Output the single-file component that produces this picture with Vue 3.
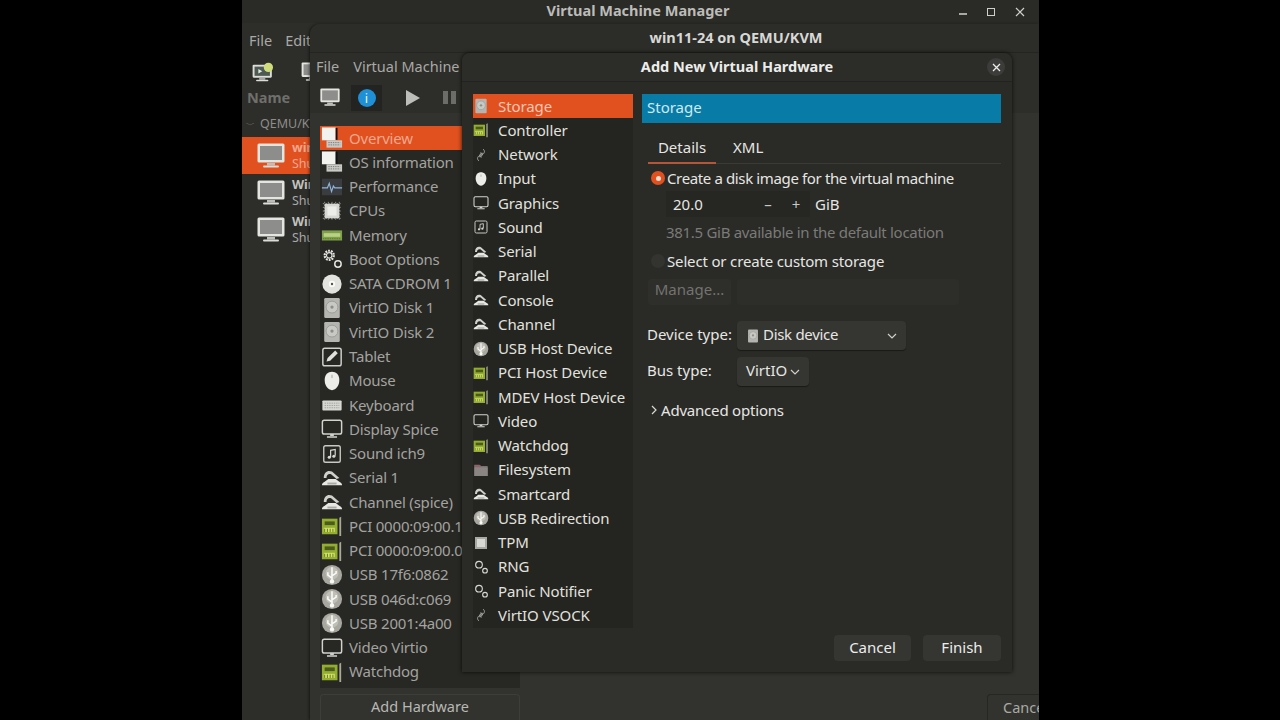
<script setup>
const vmRows = [
  { name: 'win', state: 'Shu', selected: true },
  { name: 'Wir', state: 'Shu', selected: false },
  { name: 'Wir', state: 'Shu', selected: false }
];

const detailRows = [
  { label: 'Overview', icon: 'overview' },
  { label: 'OS information', icon: 'overview' },
  { label: 'Performance', icon: 'perf' },
  { label: 'CPUs', icon: 'chip' },
  { label: 'Memory', icon: 'memory' },
  { label: 'Boot Options', icon: 'gears' },
  { label: 'SATA CDROM 1', icon: 'cdrom' },
  { label: 'VirtIO Disk 1', icon: 'disk' },
  { label: 'VirtIO Disk 2', icon: 'disk' },
  { label: 'Tablet', icon: 'tablet' },
  { label: 'Mouse', icon: 'mouse' },
  { label: 'Keyboard', icon: 'keyboard' },
  { label: 'Display Spice', icon: 'display' },
  { label: 'Sound ich9', icon: 'sound' },
  { label: 'Serial 1', icon: 'serial' },
  { label: 'Channel (spice)', icon: 'serial' },
  { label: 'PCI 0000:09:00.1', icon: 'pci' },
  { label: 'PCI 0000:09:00.0', icon: 'pci' },
  { label: 'USB 17f6:0862', icon: 'usb' },
  { label: 'USB 046d:c069', icon: 'usb' },
  { label: 'USB 2001:4a00', icon: 'usb' },
  { label: 'Video Virtio', icon: 'display' },
  { label: 'Watchdog', icon: 'pci' }
];

const hardwareRows = [
  { label: 'Storage', icon: 'disk' },
  { label: 'Controller', icon: 'pci' },
  { label: 'Network', icon: 'network' },
  { label: 'Input', icon: 'mouse' },
  { label: 'Graphics', icon: 'display' },
  { label: 'Sound', icon: 'sound' },
  { label: 'Serial', icon: 'serial' },
  { label: 'Parallel', icon: 'serial' },
  { label: 'Console', icon: 'serial' },
  { label: 'Channel', icon: 'serial' },
  { label: 'USB Host Device', icon: 'usb' },
  { label: 'PCI Host Device', icon: 'pci' },
  { label: 'MDEV Host Device', icon: 'pci' },
  { label: 'Video', icon: 'display' },
  { label: 'Watchdog', icon: 'pci' },
  { label: 'Filesystem', icon: 'folder' },
  { label: 'Smartcard', icon: 'serial' },
  { label: 'USB Redirection', icon: 'usb' },
  { label: 'TPM', icon: 'tpm' },
  { label: 'RNG', icon: 'rings' },
  { label: 'Panic Notifier', icon: 'rings' },
  { label: 'VirtIO VSOCK', icon: 'network' }
];
</script>

<template>
  <div class="stage">
    <svg class="defs" width="0" height="0" aria-hidden="true">
      <symbol id="vm" viewBox="0 0 28 26">
        <rect x="0.5" y="0.5" width="27" height="19" rx="1.5" fill="#e4e4e0" />
        <rect x="3" y="3" width="22" height="14" fill="#8d8d8b" />
        <rect x="10" y="20" width="8" height="2.5" fill="#bdbdb9" />
        <rect x="6" y="22.5" width="16" height="2" rx="1" fill="#dcdcd8" />
      </symbol>
      <symbol id="vmnew" viewBox="0 0 28 26">
        <rect x="0.5" y="3.500" width="25" height="17" rx="1.5" fill="#dcdcd8" />
        <rect x="3" y="6" width="20" height="12" fill="#4d5a52" />
        <path d="M8 9l5 3-5 3z" fill="#e8e8e4" />
        <rect x="9" y="21" width="8" height="2" fill="#bdbdb9" />
        <rect x="5" y="23" width="16" height="2" rx="1" fill="#dcdcd8" />
        <circle cx="21" cy="7" r="6" fill="#cfdc7c" />
      </symbol>
      <symbol id="overview" viewBox="0 0 24 24">
        <rect x="1" y="0.5" width="15" height="14" fill="#f2f2ee" />
        <rect x="16" y="1" width="2" height="13" fill="#111" />
        <rect x="6" y="14.5" width="17" height="8" fill="#c9c9c5" />
        <path d="M8 17h13M8 19.5h13" stroke="#777" stroke-width="1" stroke-dasharray="1.5 1" />
      </symbol>
      <symbol id="perf" viewBox="0 0 24 24">
        <rect x="1" y="3" width="22" height="18" fill="#3a3c40" />
        <path d="M1 13h6l2-5 2.5 9 2-6 1.500 2H23" fill="none" stroke="#8fb4dc" stroke-width="1.300" />
      </symbol>
      <symbol id="chip" viewBox="0 0 24 24">
        <path d="M4 2v20M8 2v20M12 2v20M16 2v20M20 2v20M2 4h20M2 8h20M2 12h20M2 16h20M2 20h20" stroke="#9a9a96" stroke-width="1" stroke-dasharray="1.500 1.500" />
        <rect x="4" y="4" width="16" height="16" rx="1" fill="#d6d6d2" />
        <rect x="7" y="7" width="10" height="10" fill="#ecece8" />
      </symbol>
      <symbol id="memory" viewBox="0 0 24 24">
        <rect x="1" y="7" width="22" height="11" fill="#7fa04a" />
        <rect x="3" y="10" width="18" height="4" fill="#b9d184" />
        <path d="M2 16h20" stroke="#5a7a30" stroke-dasharray="1.500 1" />
      </symbol>
      <symbol id="gears" viewBox="0 0 24 24" fill="none" stroke="#e4e4e0">
        <circle cx="9" cy="8" r="5" stroke-width="2.400" stroke-dasharray="2 1.100" />
        <circle cx="9" cy="8" r="3" stroke-width="1.200" />
        <circle cx="18.500" cy="17.500" r="3.500" stroke-width="1.600" />
      </symbol>
      <symbol id="cdrom" viewBox="0 0 24 24">
        <circle cx="12" cy="12" r="10.500" fill="#e2e2de" />
        <circle cx="12" cy="12" r="3.500" fill="#fafaf8" />
        <circle cx="12" cy="12" r="1.300" fill="#55554f" />
      </symbol>
      <symbol id="disk" viewBox="0 0 24 24">
        <rect x="3.500" y="1" width="17" height="22" rx="1.500" fill="#b4b4b0" />
        <circle cx="12" cy="11" r="6.500" fill="#c8c8c4" stroke="#999995" />
        <circle cx="12" cy="11" r="1.800" fill="#8c8c88" />
      </symbol>
      <symbol id="tablet" viewBox="0 0 24 24">
        <rect x="2" y="2.500" width="20" height="19" rx="2" fill="none" stroke="#cfcfcb" stroke-width="1.600" />
        <path d="M6 17l1.200-3.800L15.500 5l2.800 2.800-8.300 8.200z" fill="#e0e0dc" />
      </symbol>
      <symbol id="mouse" viewBox="0 0 24 24">
        <path d="M12 2c4.500 0 8 3 8 9s-3.500 11-8 11-8-5-8-11 3.500-9 8-9z" fill="#ecece8" />
        <rect x="11" y="5" width="2" height="4" rx="1" fill="#c5c5c1" />
      </symbol>
      <symbol id="keyboard" viewBox="0 0 24 24">
        <rect x="1.500" y="7" width="21" height="11" rx="1" fill="#d6d6d2" />
        <path d="M4 10h16M4 12.500h16M4 15h16" stroke="#9c9c98" stroke-dasharray="1.500 1" />
      </symbol>
      <symbol id="display" viewBox="0 0 24 24">
        <rect x="1.500" y="2.500" width="21" height="15" rx="2" fill="none" stroke="#d2d2ce" stroke-width="1.600" />
        <path d="M10 17.500h4v2h-4zM6.500 20h11v1.500h-11z" fill="#d2d2ce" />
      </symbol>
      <symbol id="sound" viewBox="0 0 24 24">
        <rect x="3" y="3" width="18" height="18" rx="2" fill="none" stroke="#c8c8c4" stroke-width="1.500" />
        <path d="M10.500 15.500V8l5-1v7" fill="none" stroke="#d8d8d4" stroke-width="1.300" />
        <circle cx="9" cy="15.500" r="1.700" fill="#d8d8d4" />
        <circle cx="14" cy="14.500" r="1.700" fill="#d8d8d4" />
      </symbol>
      <symbol id="serial" viewBox="0 0 24 24">
        <path d="M3 12C3 5 8 3 12 5l8 7-3 1-6-5c-3-1-5 1-5 4z" fill="#cfcfcb" />
        <path d="M1 20c0-2 1-3 3-4l4-3h8l4 3c2 1 3 2 3 4z" fill="#e6e6e2" />
        <rect x="7" y="17" width="10" height="2" fill="#a8a8a4" />
      </symbol>
      <symbol id="pci" viewBox="0 0 24 24">
        <rect x="1" y="4" width="17" height="17" fill="#93ae2f" />
        <rect x="4" y="7" width="11" height="4" fill="#4c5a1f" />
        <rect x="3" y="14" width="12" height="4.500" fill="#d4e36a" />
        <path d="M4 15v3.500M7 15v3.500M10 15v3.500M13 15v3.500" stroke="#5d6f20" />
        <path d="M20 3l2-1v21h-2z" fill="#a9a996" />
      </symbol>
      <symbol id="usb" viewBox="0 0 24 24">
        <circle cx="12" cy="12" r="11" fill="#a7a79f" />
        <circle cx="12" cy="10" r="7" fill="#bfbfb7" />
        <path d="M12 3.500v15M12 15.500l-4.500-3.500V9M12 13l4.500-3V7.500" fill="none" stroke="#fafaf6" stroke-width="1.700" />
        <circle cx="12" cy="19" r="2.400" fill="#fafaf6" />
      </symbol>
      <symbol id="network" viewBox="0 0 24 24" fill="none" stroke="#b0b0ac" stroke-width="1.300">
        <path d="M9 21c-3.500-3-2.500-6 1-8.500l4-3M14 9.500l-3.500-.5M14 9.500l-.5 3.500M15 3c3.500 3 2.500 6-1 8.500l-4 3M10 14.500l3.500.5M10 14.500l.5-3.500" />
      </symbol>
      <symbol id="folder" viewBox="0 0 24 24">
        <path d="M2 4h8l2 2h10v15H2z" fill="#7c6f72" />
        <rect x="2" y="8" width="20" height="13" fill="#8a8483" />
        <rect x="2" y="5" width="9" height="2" fill="#a05a5e" />
      </symbol>
      <symbol id="tpm" viewBox="0 0 24 24">
        <rect x="3" y="3" width="18" height="18" fill="#a8a8a4" />
        <rect x="6" y="6" width="12" height="12" fill="#d8d8d4" />
      </symbol>
      <symbol id="rings" viewBox="0 0 24 24" fill="none" stroke="#d8d8d4" stroke-width="1.700">
        <circle cx="9" cy="8.500" r="5" />
        <circle cx="18" cy="17.500" r="3.500" />
      </symbol>
    </svg>

    <section class="window main-window">
      <header class="titlebar main-title">
        <span>Virtual Machine Manager</span>
        <div class="win-controls">
          <span class="ctl-min"></span>
          <span class="ctl-max"></span>
          <svg width="10" height="10" viewBox="0 0 10 10"><path d="M1 1l8 8M9 1l-8 8" stroke="#cfcfcb" stroke-width="1.200" /></svg>
        </div>
      </header>
      <nav class="menubar main-menu">
        <span>File</span>
        <span>Edit</span>
      </nav>
      <div class="main-tools">
        <svg width="22" height="20"><use href="#vmnew" /></svg>
        <svg width="22" height="20"><use href="#vm" /></svg>
      </div>
      <div class="name-head">Name</div>
      <div class="conn"><span class="conn-chev">﹀</span>QEMU/KVM</div>
      <div v-for="vm in vmRows" :key="vm.state + vm.name + vm.selected" class="vm-row" :class="{ selected: vm.selected }">
        <svg width="28" height="26"><use href="#vm" /></svg>
        <div class="vm-text">
          <b>{{ vm.name }}</b>
          <span>{{ vm.state }}</span>
        </div>
      </div>
    </section>

    <section class="window detail-window">
      <header class="titlebar detail-title">win11-24 on QEMU/KVM</header>
      <nav class="menubar detail-menu">
        <span>File</span>
        <span>Virtual Machine</span>
      </nav>
      <div class="detail-tools">
        <svg width="20" height="19"><use href="#vm" /></svg>
        <span class="tool-info"><i>i</i></span>
        <svg class="tool-play" width="14" height="16" viewBox="0 0 14 16"><path d="M0 0l14 8-14 8z" fill="#bdbdb9" /></svg>
        <span class="tool-pause"><i></i><i></i></span>
      </div>
      <div class="detail-body">
        <div class="detail-col">
          <ul class="detail-list">
            <li v-for="(row, i) in detailRows" :key="row.label" :class="{ active: i === 0 }">
              <svg width="22" height="22"><use :href="'#' + row.icon" /></svg>
              <span>{{ row.label }}</span>
            </li>
          </ul>
          <button class="add-hw">Add Hardware</button>
        </div>
        <button class="back-cancel">Cancel</button>
      </div>
    </section>

    <section class="window dialog">
      <header class="dialog-head">
        <span>Add New Virtual Hardware</span>
        <span class="dialog-close">
          <svg width="9" height="9" viewBox="0 0 9 9"><path d="M1 1l7 7M8 1L1 8" stroke="#ececea" stroke-width="1.300" /></svg>
        </span>
      </header>
      <div class="dialog-body">
        <ul class="hw-list">
          <li v-for="(row, i) in hardwareRows" :key="row.label" :class="{ active: i === 0 }">
            <svg width="16" height="16"><use :href="'#' + row.icon" /></svg>
            <span>{{ row.label }}</span>
          </li>
        </ul>
        <div class="panel">
          <div class="panel-title">Storage</div>
          <div class="tabs">
            <span class="tab on">Details</span>
            <span class="tab">XML</span>
          </div>
          <div class="radio-row first">
            <span class="radio checked"></span>
            <span>Create a disk image for the virtual machine</span>
          </div>
          <div class="size-row">
            <div class="spin">
              <span class="spin-value">20.0</span>
              <span class="spin-btn">–</span>
              <span class="spin-btn">+</span>
            </div>
            <span>GiB</span>
          </div>
          <div class="hint">381.5 GiB available in the default location</div>
          <div class="radio-row second">
            <span class="radio"></span>
            <span>Select or create custom storage</span>
          </div>
          <div class="manage-row">
            <button class="manage">Manage...</button>
            <div class="path-entry"></div>
          </div>
          <div class="field-row device">
            <label>Device type:</label>
            <div class="combo device-combo">
              <svg width="14" height="14"><use href="#disk" /></svg>
              <span class="combo-text">Disk device</span>
              <svg width="10" height="6" viewBox="0 0 10 6"><path d="M1 1l4 4 4-4" fill="none" stroke="#cfcfcb" stroke-width="1.200" /></svg>
            </div>
          </div>
          <div class="field-row bus">
            <label>Bus type:</label>
            <div class="combo bus-combo">
              <span class="combo-text">VirtIO</span>
              <svg width="10" height="6" viewBox="0 0 10 6"><path d="M1 1l4 4 4-4" fill="none" stroke="#cfcfcb" stroke-width="1.200" /></svg>
            </div>
          </div>
          <div class="advanced">
            <svg width="6" height="10" viewBox="0 0 6 10"><path d="M1 1l4 4-4 4" fill="none" stroke="#d8d8d4" stroke-width="1.200" /></svg>
            <span>Advanced options</span>
          </div>
        </div>
      </div>
      <footer class="dialog-foot">
        <button class="foot-btn cancel">Cancel</button>
        <button class="foot-btn">Finish</button>
      </footer>
    </section>
  </div>
</template>

<style>
html, body {
  background: #000;
}
</style>

<style scoped>
.stage {
  position: relative;
  width: 1280px;
  height: 720px;
  overflow: hidden;
  background: #000;
  font-family: "Noto Sans", "Open Sans", sans-serif;
  font-size: 15px;
  color: #e6e6e2;
}
.defs {
  position: absolute;
}
.window {
  position: absolute;
  box-sizing: border-box;
  overflow: hidden;
}
ul {
  list-style: none;
  margin: 0;
  padding: 0;
}
button {
  font: inherit;
  color: inherit;
  border: none;
  background: none;
  padding: 0;
}

.main-window {
  left: 242px;
  top: 0;
  width: 797px;
  height: 720px;
  background: #2d2d2a;
}
.titlebar {
  font-weight: 700;
  text-align: center;
}
.main-title {
  position: relative;
  height: 23px;
  line-height: 21px;
  padding-right: 5px;
  color: #bcbcb8;
  font-size: 14.5px;
  background: #2a2a27;
}
.win-controls {
  position: absolute;
  top: 0;
  right: 14px;
  height: 23px;
  display: flex;
  align-items: center;
  gap: 20px;
}
.ctl-min {
  width: 8px;
  height: 2px;
  margin-top: 4px;
  background: #a8a8a4;
}
.ctl-max {
  width: 6px;
  height: 6px;
  border: 1px solid #cfcfcb;
}
.menubar {
  display: flex;
  color: #a9a9a5;
}
.main-menu {
  gap: 13px;
  height: 34px;
  padding: 7px 0 0 7px;
  box-sizing: border-box;
  font-size: 14.500px;
}
.main-tools {
  display: flex;
  gap: 27px;
  height: 29px;
  padding-left: 10px;
  align-items: center;
}
.name-head {
  height: 29px;
  line-height: 22px;
  padding-left: 5px;
  font-weight: 700;
  color: #6f6f6b;
  font-size: 14.500px;
}
.conn {
  height: 22px;
  line-height: 18px;
  padding-left: 4px;
  font-size: 12.500px;
  color: #8d8d89;
}
.conn-chev {
  display: inline-block;
  width: 14px;
  font-size: 9px;
}
.vm-row {
  display: flex;
  align-items: center;
  gap: 7px;
  height: 37px;
  padding-left: 15px;
}
.vm-row.selected {
  background: #e1501f;
}
.vm-text {
  display: flex;
  flex-direction: column;
  font-size: 12.500px;
  line-height: 16px;
  color: #a9a9a5;
}
.vm-text b {
  color: #c2c2be;
}
.vm-row.selected .vm-text,
.vm-row.selected .vm-text b {
  color: #efa88e;
}

.detail-window {
  left: 310px;
  top: 24px;
  width: 729px;
  height: 696px;
  background: #32332e;
  border-top-left-radius: 10px;
  box-shadow: -1px 0 3px rgba(0, 0, 0, 0.5);
}
.detail-title {
  height: 29px;
  line-height: 27px;
  padding-left: 123px;
  color: #d8d8d4;
  font-size: 14.500px;
  background: #2c2c29;
  border-bottom: 1px solid #242422;
  box-sizing: border-box;
}
.detail-menu {
  gap: 14px;
  height: 29px;
  padding: 3px 0 0 6px;
  box-sizing: border-box;
  font-size: 14.500px;
  background: #2d2d2a;
}
.detail-tools {
  display: flex;
  align-items: center;
  height: 31px;
  padding-left: 10px;
  background: #2d2d2a;
}
.tool-info {
  display: flex;
  align-items: center;
  justify-content: center;
  width: 31px;
  height: 26px;
  margin-left: 11px;
  background: #232321;
}
.tool-info i {
  width: 18px;
  height: 18px;
  border-radius: 50%;
  background: #1f8fd6;
  color: #e8f4fc;
  font-size: 13px;
  font-style: normal;
  line-height: 18px;
  text-align: center;
}
.tool-play {
  margin-left: 24px;
}
.tool-pause {
  display: flex;
  gap: 3px;
  margin-left: 23px;
}
.tool-pause i {
  width: 5px;
  height: 13px;
  background: #6c6c68;
}
.detail-body {
  display: flex;
  justify-content: space-between;
  align-items: flex-end;
  height: 607px;
  padding-left: 10px;
}
.detail-col {
  width: 200px;
  display: flex;
  flex-direction: column;
  padding-top: 13px;
  box-sizing: border-box;
  height: 607px;
}
.detail-list {
  height: 562px;
  background: #272724;
  overflow: hidden;
  color: #a3a39f;
  letter-spacing: -0.2px;
}
.detail-list li {
  display: flex;
  align-items: center;
  gap: 6px;
  height: 24.270px;
  padding-left: 1px;
  white-space: nowrap;
}
.detail-list li span {
  margin-bottom: 1px;
}
.detail-list li.active {
  background: #e1501f;
  color: #efa88e;
  width: 143px;
}
.add-hw {
  height: 26px;
  margin-top: 6px;
  padding-bottom: 3px;
  background: #32332e;
  border: 1px solid #3d3d39;
  border-bottom: none;
  box-sizing: border-box;
  color: #b8b8b4;
  border-radius: 4px 4px 0 0;
  font-size: 14.500px;
}
.back-cancel {
  width: 52px;
  height: 26px;
  padding: 0 0 2px 15px;
  text-align: left;
  white-space: nowrap;
  background: #32332e;
  border-left: 1px solid #262623;
  border-top: 1px solid #262623;
  color: #a9a9a5;
  font-size: 14.500px;
  border-radius: 4px 0 0 0;
  box-sizing: border-box;
}

.dialog {
  left: 462px;
  top: 53px;
  width: 550px;
  height: 619px;
  background: #2a2a27;
  border-radius: 8px 8px 0 0;
  box-shadow: 0 0 4px rgba(0, 0, 0, 0.8);
  display: flex;
  flex-direction: column;
}
.dialog-head {
  position: relative;
  height: 29px;
  line-height: 27px;
  text-align: center;
  font-weight: 700;
  font-size: 14.500px;
  color: #ececea;
  background: #2c2c29;
  border-bottom: 1px solid #222220;
  box-sizing: border-box;
}
.dialog-close {
  position: absolute;
  top: 5px;
  right: 7px;
  width: 18px;
  height: 18px;
  border-radius: 50%;
  background: #3c3c3a;
  display: flex;
  align-items: center;
  justify-content: center;
}
.dialog-body {
  display: flex;
  gap: 9px;
  padding: 12px 11px 0;
  height: 534px;
  box-sizing: content-box;
}
.hw-list {
  width: 160px;
  flex: none;
  height: 534px;
  background: #242421;
  overflow: hidden;
  letter-spacing: -0.1px;
}
.hw-list li {
  display: flex;
  align-items: center;
  gap: 9px;
  height: 24.250px;
  white-space: nowrap;
  color: #e2e2de;
}
.hw-list li span {
  margin-bottom: 1px;
}
.hw-list li.active {
  background: #e1501f;
  color: #f6c6b2;
}
.panel {
  flex: 1;
  min-width: 0;
}
.panel-title {
  height: 29px;
  line-height: 27px;
  padding-left: 5px;
  background: #087ca6;
  color: #cfeaf3;
}
.tabs {
  display: flex;
  height: 34px;
  margin: 7px 0 0 6px;
  border-bottom: 1px solid #3a3a37;
  box-sizing: border-box;
}
.tab {
  padding: 6px 8px 0;
  margin-right: 9px;
  height: 33px;
  line-height: 22px;
  box-sizing: border-box;
}
.tab.on {
  border-bottom: 2px solid #b4563a;
  height: 34px;
  width: 68px;
  text-align: center;
}
.radio-row {
  display: flex;
  align-items: center;
  gap: 1px;
  height: 20px;
  margin: 4px 0 0 9px;
  letter-spacing: -0.16px;
}
.radio-row.first {
  letter-spacing: -0.37px;
}
.radio {
  width: 14px;
  height: 14px;
  margin-right: 1px;
  border-radius: 50%;
  background: #33332f;
  box-sizing: border-box;
}
.radio.checked {
  background: #e1501f;
  display: flex;
  align-items: center;
  justify-content: center;
}
.radio.checked::after {
  content: "";
  width: 5px;
  height: 5px;
  border-radius: 50%;
  background: #f5ddd2;
}
.radio-row.second {
  margin-top: 9px;
}
.size-row {
  display: flex;
  align-items: center;
  gap: 5px;
  height: 26px;
  margin: 3px 0 0 24px;
}
.spin {
  display: flex;
  align-items: center;
  width: 144px;
  height: 26px;
  background: #262623;
  box-sizing: border-box;
  padding-left: 7px;
}
.spin-value {
  width: 84px;
}
.spin-btn {
  width: 29px;
  text-align: center;
  color: #c8c8c4;
}
.hint {
  height: 20px;
  line-height: 20px;
  margin: 5px 0 0 24px;
  color: #7b7b77;
  letter-spacing: -0.3px;
}
.manage-row {
  display: flex;
  gap: 6px;
  margin: 8px 0 0 6px;
  height: 26px;
}
.manage {
  width: 83px;
  height: 26px;
  padding-bottom: 6px;
  background: #2e2e2b;
  color: #73736f;
  border-radius: 3px;
}
.path-entry {
  width: 222px;
  height: 26px;
  background: #2d2d2a;
  border-radius: 3px;
}
.field-row {
  display: flex;
  align-items: center;
  margin-left: 5px;
  height: 29px;
}
.field-row label {
  width: 90px;
  margin-bottom: 4px;
}
.field-row.device {
  margin-top: 16px;
}
.field-row.bus {
  margin-top: 7px;
}
.combo {
  display: flex;
  align-items: center;
  height: 29px;
  box-sizing: border-box;
  background: #353532;
  border-radius: 4px;
  box-shadow: 0 1px 1px rgba(0, 0, 0, 0.4);
}
.combo-text {
  margin-bottom: 4px;
}
.device-combo {
  width: 169px;
  padding: 0 9px;
  gap: 3px;
  letter-spacing: -0.3px;
}
.device-combo .combo-text {
  flex: 1;
}
.bus-combo {
  width: 72px;
  padding-left: 9px;
  gap: 3px;
}
.advanced {
  display: flex;
  align-items: center;
  gap: 4px;
  height: 20px;
  margin: 14px 0 0 9px;
  letter-spacing: -0.2px;
}
.dialog-foot {
  display: flex;
  justify-content: flex-end;
  gap: 12px;
  padding: 7px 11px 0 0;
}
.foot-btn {
  width: 78px;
  height: 26px;
  padding-bottom: 2px;
  background: #353532;
  color: #ececea;
  border-radius: 4px;
}
.foot-btn.cancel {
  width: 77px;
}
</style>
